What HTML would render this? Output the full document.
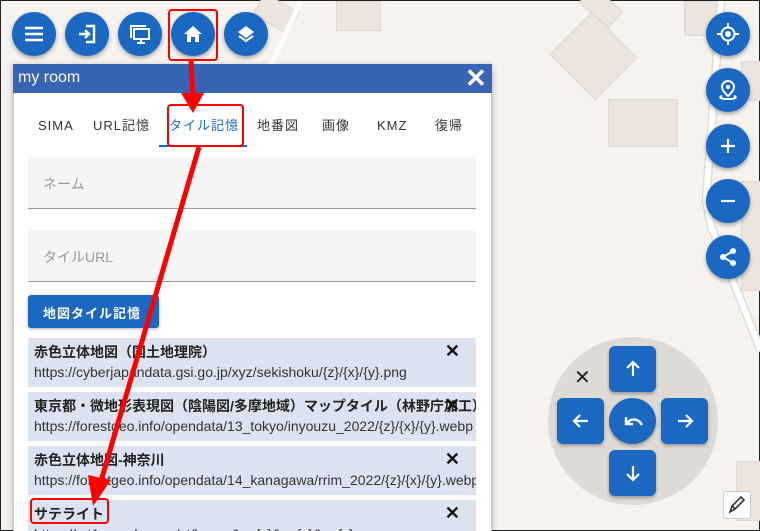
<!DOCTYPE html>
<html style="overflow:hidden"><head><meta charset="utf-8"><style>
*{margin:0;padding:0;box-sizing:border-box}
html,body{width:760px;height:531px;overflow:hidden}
body{position:relative;background:#f6f3ef;font-family:"Liberation Sans","Noto Sans CJK JP",sans-serif;border:1px solid #222}
.a{position:absolute}
.c{position:absolute;width:44px;height:44px;border-radius:50%;background:#1b68c2;box-shadow:0 2px 4px rgba(0,0,0,.35);display:flex;align-items:center;justify-content:center}
.bld{position:absolute;background:#ece4dd;border:1px solid #e0d8d0}
.tab{position:absolute;top:116px;font-size:13px;line-height:18px;height:18px;color:#333;letter-spacing:1px}
.inp{position:absolute;left:27px;width:448px;height:52px;background:#f5f5f5;border-bottom:1px solid #999;border-radius:4px 4px 0 0;color:#999;font-size:14px;padding:17px 0 0 15px}
.it{position:absolute;left:27px;width:448px;background:#dbe3f0;padding:6px 0 0 6px;color:#333;font-size:14px;line-height:17px;overflow:hidden;white-space:nowrap}
.it b{display:block;font-size:14px;color:#222;margin-bottom:3px}
.it i{position:absolute;right:16px;top:5px;font-style:normal;font-size:18px;font-weight:bold;color:#111;background:transparent}
.sq{position:absolute;width:47px;height:46px;background:#1b68c2;border-radius:6px;box-shadow:0 2px 3px rgba(0,0,0,.3);display:flex;align-items:center;justify-content:center}
</style></head><body>
<!-- map -->
<div class="bld" style="left:580px;top:-5px;width:40px;height:22px;transform:rotate(40deg)"></div>
<div class="bld" style="left:560px;top:25px;width:65px;height:60px;transform:rotate(45deg)"></div>
<div class="bld" style="left:607px;top:98px;width:70px;height:48px"></div>
<div class="bld" style="left:683px;top:0;width:40px;height:35px"></div>
<div class="bld" style="left:740px;top:60px;width:30px;height:40px"></div>
<div class="bld" style="left:740px;top:180px;width:30px;height:110px"></div>
<div class="bld" style="left:735px;top:460px;width:30px;height:60px"></div>
<div class="bld" style="left:255px;top:0;width:40px;height:25px;transform:rotate(30deg)"></div>
<div class="bld" style="left:335px;top:0;width:45px;height:30px"></div>
<svg class="a" style="left:0;top:0" width="760" height="531"><path d="M720 0L705 200L710 225L760 350" fill="none" stroke="#ddd" stroke-width="9"/><path d="M720 0L705 200L710 225L760 350" fill="none" stroke="#fff" stroke-width="6"/><path d="M300 0L270 64" fill="none" stroke="#fff" stroke-width="5"/></svg>
<!-- top buttons -->
<div class="c" style="left:11px;top:11px"><svg width="20" height="16"><path d="M1 2h18M1 8h18M1 14h18" stroke="#fff" stroke-width="2.4"/></svg></div>
<div class="c" style="left:64px;top:11px"><svg width="20" height="20"><path d="M9 2h8v16h-8" fill="none" stroke="#fff" stroke-width="2.4"/><path d="M2 10h9M8 6l4 4-4 4" fill="none" stroke="#fff" stroke-width="2.4"/></svg></div>
<div class="c" style="left:117px;top:11px"><svg width="22" height="20"><path d="M2 14V2h15" fill="none" stroke="#fff" stroke-width="2"/><rect x="5" y="5" width="15" height="10" fill="none" stroke="#fff" stroke-width="2"/><path d="M12 15v3M8 19h8" stroke="#fff" stroke-width="2"/></svg></div>
<div class="c" style="left:170px;top:11px"><svg width="20" height="18"><path d="M10 1L1 9h3v8h4v-5h4v5h4V9h3z" fill="#fff"/></svg></div>
<div class="c" style="left:223px;top:11px"><svg width="20" height="20"><path d="M10 2L2 8l8 6 8-6z" fill="#fff"/><path d="M3 12l7 5 7-5" fill="none" stroke="#fff" stroke-width="2"/></svg></div>
<!-- right buttons -->
<div class="c" style="left:705px;top:11px"><svg width="24" height="24"><circle cx="12" cy="12" r="6.5" fill="none" stroke="#fff" stroke-width="2"/><circle cx="12" cy="12" r="3" fill="#fff"/><path d="M12 1v4M12 19v4M1 12h4M19 12h4" stroke="#fff" stroke-width="2"/></svg></div>
<div class="c" style="left:705px;top:67px"><svg width="20" height="22"><path d="M10 2a6 6 0 0 0-6 6c0 4 6 9 6 9s6-5 6-9a6 6 0 0 0-6-6z" fill="none" stroke="#fff" stroke-width="2"/><circle cx="10" cy="8" r="2" fill="#fff"/><path d="M4 17c-3 1-3 3 6 3s9-2 6-3" fill="none" stroke="#fff" stroke-width="2"/></svg></div>
<div class="c" style="left:705px;top:123px"><svg width="16" height="16"><path d="M8 1v14M1 8h14" stroke="#fff" stroke-width="2.2"/></svg></div>
<div class="c" style="left:705px;top:178px"><svg width="16" height="16"><path d="M1 8h14" stroke="#fff" stroke-width="2.2"/></svg></div>
<div class="c" style="left:705px;top:234px"><svg width="20" height="20"><circle cx="15" cy="4" r="3" fill="#fff"/><circle cx="5" cy="10" r="3" fill="#fff"/><circle cx="15" cy="16" r="3" fill="#fff"/><path d="M15 4L5 10l10 6" fill="none" stroke="#fff" stroke-width="2"/></svg></div>
<!-- dpad -->
<div class="a" style="left:547px;top:336px;width:170px;height:168px;border-radius:50%;background:#dedad6"></div>
<div class="a" style="left:573px;top:364px;font-size:20px;color:#222">✕</div>
<div class="sq" style="left:608px;top:345px"><svg width="16" height="18"><path d="M8 16V3M2 8l6-6 6 6" fill="none" stroke="#fff" stroke-width="2.2"/></svg></div>
<div class="sq" style="left:556px;top:397px"><svg width="18" height="16"><path d="M16 8H3M8 2L2 8l6 6" fill="none" stroke="#fff" stroke-width="2.2"/></svg></div>
<div class="sq" style="left:608px;top:397px;border-radius:50%"><svg width="22" height="16"><path d="M4 4v7h7" fill="none" stroke="#fff" stroke-width="2.4"/><path d="M5 10c4-5 11-5 15 2" fill="none" stroke="#fff" stroke-width="2.4"/></svg></div>
<div class="sq" style="left:660px;top:397px"><svg width="18" height="16"><path d="M2 8h13M10 2l6 6-6 6" fill="none" stroke="#fff" stroke-width="2.2"/></svg></div>
<div class="sq" style="left:608px;top:449px"><svg width="16" height="18"><path d="M8 2v13M2 10l6 6 6-6" fill="none" stroke="#fff" stroke-width="2.2"/></svg></div>
<div class="a" style="left:722px;top:490px;width:28px;height:28px;background:#fff;border:1px solid #ccc;border-radius:3px"><svg width="26" height="26"><path d="M6 20l2-6 9-9 3 3-9 9z M8 14l3 3" fill="none" stroke="#333" stroke-width="1.6"/></svg></div>
<!-- panel -->
<div class="a" style="left:12px;top:63px;width:479px;height:470px;background:#fff;border:1px solid #c8c8c8;box-shadow:0 2px 6px rgba(0,0,0,.3)"></div>
<div class="a" style="left:12px;top:63px;width:479px;height:29px;background:#3764b4;color:#fff;font-size:16px;padding:5px 0 0 5px">my room</div>
<div class="a" style="left:464px;top:63px;color:#fff;font-size:26px;font-weight:bold;line-height:28px">✕</div>
<div class="tab" style="left:37px">SIMA</div>
<div class="tab" style="left:92px">URL記憶</div>
<div class="tab" style="left:168px;color:#1b68c2">タイル記憶</div>
<div class="tab" style="left:256px">地番図</div>
<div class="tab" style="left:321px">画像</div>
<div class="tab" style="left:376px">KMZ</div>
<div class="tab" style="left:434px">復帰</div>
<div class="a" style="left:158px;top:144px;width:88px;height:2px;background:#1b68c2"></div>
<div class="inp" style="top:156px">ネーム</div>
<div class="inp" style="top:229px">タイルURL</div>
<div class="a" style="left:27px;top:294px;width:131px;height:33px;background:#1b68c2;border-radius:3px;color:#fff;font-size:13px;font-weight:bold;padding:8px 0 0 15px;letter-spacing:1px;box-shadow:0 1px 3px rgba(0,0,0,.3)">地図タイル記憶</div>
<div class="it" style="top:337px;height:49px"><b>赤色立体地図（国土地理院）</b>https://cyberjapandata.gsi.go.jp/xyz/sekishoku/{z}/{x}/{y}.png<i>✕</i></div>
<div class="it" style="top:391px;height:49px"><b>東京都・微地形表現図（陰陽図/多摩地域）マップタイル（林野庁加工）</b>https://forestgeo.info/opendata/13_tokyo/inyouzu_2022/{z}/{x}/{y}.webp<i>✕</i></div>
<div class="it" style="top:445px;height:49px"><b>赤色立体地図-神奈川</b>https://forestgeo.info/opendata/14_kanagawa/rrim_2022/{z}/{x}/{y}.webp<i>✕</i></div>
<div class="it" style="top:499px;height:40px"><b>サテライト</b>https://mt1.google.com/vt/lyrs=s&amp;x={x}&amp;y={y}&amp;z={z}<i>✕</i></div>
<!-- annotations -->
<div class="a" style="left:167px;top:8px;width:50px;height:52px;border:2px solid #f00;border-radius:4px"></div>
<div class="a" style="left:166px;top:103px;width:77px;height:43px;border:2px solid #f00;border-radius:4px"></div>
<div class="a" style="left:29px;top:497px;width:79px;height:26px;border:2px solid #f00;border-radius:4px"></div>
<svg class="a" style="left:0;top:0" width="760" height="531"><path d="M190 60L192 98" stroke="#f00" stroke-width="5"/><path d="M180 92l12 20 11-20z" fill="#f00"/><path d="M198 146L100 480" stroke="#f00" stroke-width="5"/><path d="M87 474l5 31 18-26z" fill="#f00"/></svg>
</body></html>
